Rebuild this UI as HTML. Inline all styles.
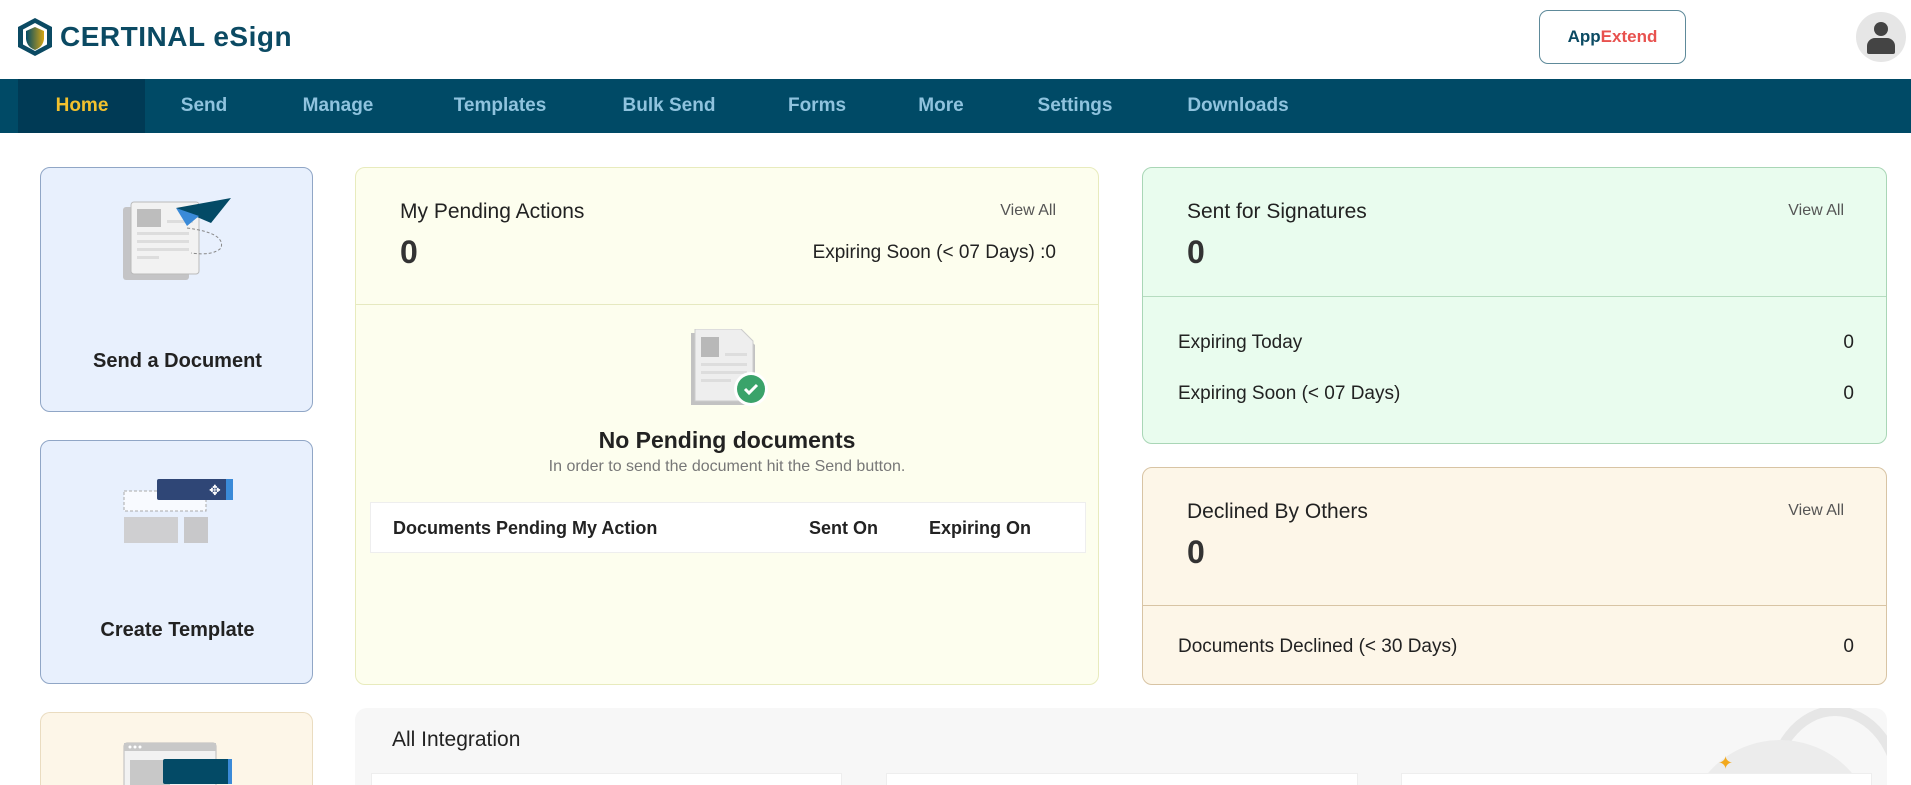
<!DOCTYPE html>
<html><head><meta charset="utf-8"><style>
*{box-sizing:border-box;margin:0;padding:0}
html,body{width:1911px;height:785px;overflow:hidden}
body{background:#fff;font-family:"Liberation Sans",sans-serif;color:#222;position:relative}
.abs{position:absolute}
.nav{position:absolute;left:0;top:79px;width:1911px;height:54px;background:#004a66}
.nav span{position:absolute;top:0;line-height:54px;font-size:19px;font-weight:bold;color:#8fc3de;transform:translateX(-50%)}
.card{position:absolute;border-radius:10px;border:1px solid}
.t{position:absolute;white-space:nowrap}
</style></head><body>
<svg class="abs" style="left:16px;top:17px" width="38" height="40" viewBox="0 0 38 40">
<defs><linearGradient id="g" x1="0" x2="1"><stop offset="0" stop-color="#004a66"/><stop offset="1" stop-color="#d4a514"/></linearGradient></defs>
<polygon points="19,1 36,10 36,30 19,39 2,30 2,10" fill="#0b4a63"/>
<polygon points="19,6 31,12.5 31,27.5 19,34 7,27.5 7,12.5" fill="#fff"/>
<path d="M19 10 L28 14 L28 22 Q27 30 19 33 Q11 30 10 22 L10 14 Z" fill="url(#g)"/>
</svg>
<div class="t" style="left:60px;top:21px;font-size:28px;font-weight:bold;color:#0b4a63;letter-spacing:0.5px">CERTINAL eSign</div>
<div class="abs" style="left:1539px;top:10px;width:147px;height:54px;border:1.5px solid #5e8a9a;border-radius:9px;text-align:center;line-height:52px;font-size:17px;font-weight:bold"><span style="color:#0b4a63">App</span><span style="color:#e8524f">Extend</span></div>
<div class="abs" style="left:1856px;top:12px;width:50px;height:50px;border-radius:50%;background:#e6e6e6;overflow:hidden">
<div class="abs" style="left:18px;top:10px;width:14px;height:14px;border-radius:50%;background:#444"></div>
<div class="abs" style="left:11px;top:26px;width:28px;height:16px;border-radius:8px 8px 2px 2px;background:#444"></div></div>
<div class="nav">
<div class="abs" style="left:18px;top:0;width:127px;height:54px;background:#003a55"></div>
<span style="left:82px;color:#f2c12e">Home</span><span style="left:204px">Send</span><span style="left:338px">Manage</span><span style="left:500px">Templates</span><span style="left:669px">Bulk Send</span><span style="left:817px">Forms</span><span style="left:941px">More</span><span style="left:1075px">Settings</span><span style="left:1238px">Downloads</span>
</div>
<div class="card" style="left:40px;top:167px;width:273px;height:245px;background:#e8f0fd;border-color:#90a6c6">
<svg class="abs" style="left:80px;top:30px" width="115" height="85" viewBox="0 0 115 85">
<rect x="2" y="9" width="66" height="73" rx="3" fill="#c4c4c6"/>
<rect x="10" y="4" width="68" height="72" rx="3" fill="#f2f2f2" stroke="#bbb"/>
<rect x="16" y="11" width="24" height="18" fill="#bdbdbd"/>
<rect x="46" y="22" width="26" height="3" fill="#ddd"/>
<rect x="16" y="34" width="52" height="3" fill="#ddd"/><rect x="16" y="42" width="52" height="3" fill="#ddd"/><rect x="16" y="50" width="52" height="3" fill="#ddd"/><rect x="16" y="58" width="22" height="3" fill="#ddd"/>
<path d="M66 30 Q105 35 100 50 Q92 58 70 55" fill="none" stroke="#888" stroke-dasharray="3 2"/>
<polygon points="55,10 110,0 90,25" fill="#034a66"/><polygon points="55,10 78,18 66,28" fill="#3a8ad8"/>
</svg>
<div class="t" style="left:0;width:273px;text-align:center;top:182px;font-size:20px;font-weight:bold;color:#222">Send a Document</div>
</div>
<div class="card" style="left:40px;top:440px;width:273px;height:244px;background:#e8f0fd;border-color:#90a6c6">
<svg class="abs" style="left:82px;top:38px" width="115" height="70" viewBox="0 0 115 70">
<rect x="1" y="12" width="82" height="20" fill="#f8faff" stroke="#aaa" stroke-dasharray="3 2"/>
<rect x="34" y="0" width="75" height="21" rx="2" fill="#2f4676"/><rect x="103" y="0" width="7" height="21" fill="#3a8ad8"/>
<text x="86" y="16" font-size="14" fill="#fff" font-family="DejaVu Sans">✥</text>
<rect x="1" y="38" width="54" height="26" fill="#cfcfd1"/><rect x="61" y="38" width="24" height="26" fill="#c8c8ca"/>
</svg>
<div class="t" style="left:0;width:273px;text-align:center;top:178px;font-size:20px;font-weight:bold;color:#222">Create Template</div>
</div>
<div class="card" style="left:40px;top:712px;width:273px;height:73px;background:#fdf6e8;border-color:#eadcc0;border-bottom:none;border-radius:10px 10px 0 0;overflow:hidden">
<svg class="abs" style="left:82px;top:29px" width="112" height="50" viewBox="0 0 112 50">
<rect x="1" y="1" width="92" height="60" rx="3" fill="#f2f2f2" stroke="#bbb"/><rect x="1" y="1" width="92" height="8" fill="#c8c8c8"/>
<circle cx="7" cy="5" r="1.5" fill="#fff"/><circle cx="12" cy="5" r="1.5" fill="#fff"/><circle cx="17" cy="5" r="1.5" fill="#fff"/>
<rect x="7" y="18" width="40" height="30" fill="#c8c8c8"/><rect x="40" y="17" width="68" height="25" rx="2" fill="#034a66"/><rect x="105" y="17" width="4" height="25" fill="#3a8ad8"/>
</svg>
</div>
<div class="card" style="left:355px;top:167px;width:744px;height:518px;background:#fdfeee;border-color:#e8ebbd">
<div class="t" style="left:44px;top:32px;font-size:21px;color:#222">My Pending Actions</div>
<div class="t" style="right:42px;top:34px;font-size:16px;color:#555">View All</div>
<div class="t" style="left:44px;top:66px;font-size:32px;font-weight:bold;color:#333">0</div>
<div class="t" style="right:42px;top:74px;font-size:19px;color:#222">Expiring Soon (&lt; 07 Days) :0</div>
<div class="abs" style="left:0;top:136px;width:742px;height:1px;background:#e6e9c0"></div>
<svg class="abs" style="left:333px;top:161px" width="80" height="80" viewBox="0 0 80 80">
<path d="M2 4 H54 L66 16 V76 H2 Z" fill="#c2c2c2"/><path d="M6 0 H52 L64 12 V72 H6 Z" fill="#eee" stroke="#ccc"/>
<rect x="12" y="8" width="18" height="20" fill="#b8b8b8"/><rect x="36" y="24" width="22" height="3" fill="#ddd"/>
<rect x="12" y="34" width="46" height="3" fill="#ddd"/><rect x="12" y="42" width="46" height="3" fill="#ddd"/><rect x="12" y="50" width="30" height="3" fill="#ddd"/>
<circle cx="62" cy="60" r="17" fill="#fff"/><circle cx="62" cy="60" r="14" fill="#3aa36a"/>
<path d="M56 60 L60 64 L68 56" fill="none" stroke="#fff" stroke-width="3"/>
</svg>
<div class="t" style="left:0;width:742px;text-align:center;top:259px;font-size:23px;font-weight:bold;color:#222">No Pending documents</div>
<div class="t" style="left:0;width:742px;text-align:center;top:290px;font-size:16px;color:#777">In order to send the document hit the Send button.</div>
<div class="abs" style="left:14px;top:334px;width:716px;height:51px;background:#fff;border:1px solid #eee">
<div class="t" style="left:22px;top:15px;font-size:18px;font-weight:bold;color:#222">Documents Pending My Action</div>
<div class="t" style="left:438px;top:15px;font-size:18px;font-weight:bold;color:#222">Sent On</div>
<div class="t" style="left:558px;top:15px;font-size:18px;font-weight:bold;color:#222">Expiring On</div>
</div>
</div>
<div class="card" style="left:1142px;top:167px;width:745px;height:277px;background:#e9fcee;border-color:#a9d6b6">
<div class="t" style="left:44px;top:32px;font-size:21px;color:#222">Sent for Signatures</div>
<div class="t" style="right:42px;top:34px;font-size:16px;color:#555">View All</div>
<div class="t" style="left:44px;top:66px;font-size:32px;font-weight:bold;color:#333">0</div>
<div class="abs" style="left:0;top:128px;width:743px;height:1px;background:#b6dcc0"></div>
<div class="t" style="left:35px;top:164px;font-size:19px;color:#222">Expiring Today</div><div class="t" style="right:32px;top:164px;font-size:19px">0</div>
<div class="t" style="left:35px;top:215px;font-size:19px;color:#222">Expiring Soon (&lt; 07 Days)</div><div class="t" style="right:32px;top:215px;font-size:19px">0</div>
</div>
<div class="card" style="left:1142px;top:467px;width:745px;height:218px;background:#fdf6e8;border-color:#d8c4a4">
<div class="t" style="left:44px;top:32px;font-size:21px;color:#222">Declined By Others</div>
<div class="t" style="right:42px;top:34px;font-size:16px;color:#555">View All</div>
<div class="t" style="left:44px;top:66px;font-size:32px;font-weight:bold;color:#333">0</div>
<div class="abs" style="left:0;top:137px;width:743px;height:1px;background:#d8c4a4"></div>
<div class="t" style="left:35px;top:168px;font-size:19px;color:#222">Documents Declined (&lt; 30 Days)</div><div class="t" style="right:32px;top:168px;font-size:19px">0</div>
</div>
<div class="abs" style="left:355px;top:708px;width:1532px;height:77px;background:#f7f7f7;border-radius:12px 12px 0 0;overflow:hidden">
<div class="abs" style="left:1410px;top:-2px;width:140px;height:180px;border-radius:50%;border:10px solid #e6e6e6"></div>
<div class="abs" style="left:1330px;top:32px;width:190px;height:190px;border-radius:50%;background:#ececec"></div>
<div class="t" style="left:37px;top:20px;font-size:21px;color:#222">All Integration</div>
<div class="abs" style="left:16px;top:65px;width:471px;height:60px;background:#fff;border:1px solid #eee"></div>
<div class="abs" style="left:531px;top:65px;width:472px;height:60px;background:#fff;border:1px solid #eee"></div>
<div class="abs" style="left:1046px;top:65px;width:471px;height:60px;background:#fff;border:1px solid #eee"></div>
<div class="t" style="left:1363px;top:45px;font-size:18px;color:#f2a81c;font-family:'DejaVu Sans'">✦</div>
</div>
</body></html>
